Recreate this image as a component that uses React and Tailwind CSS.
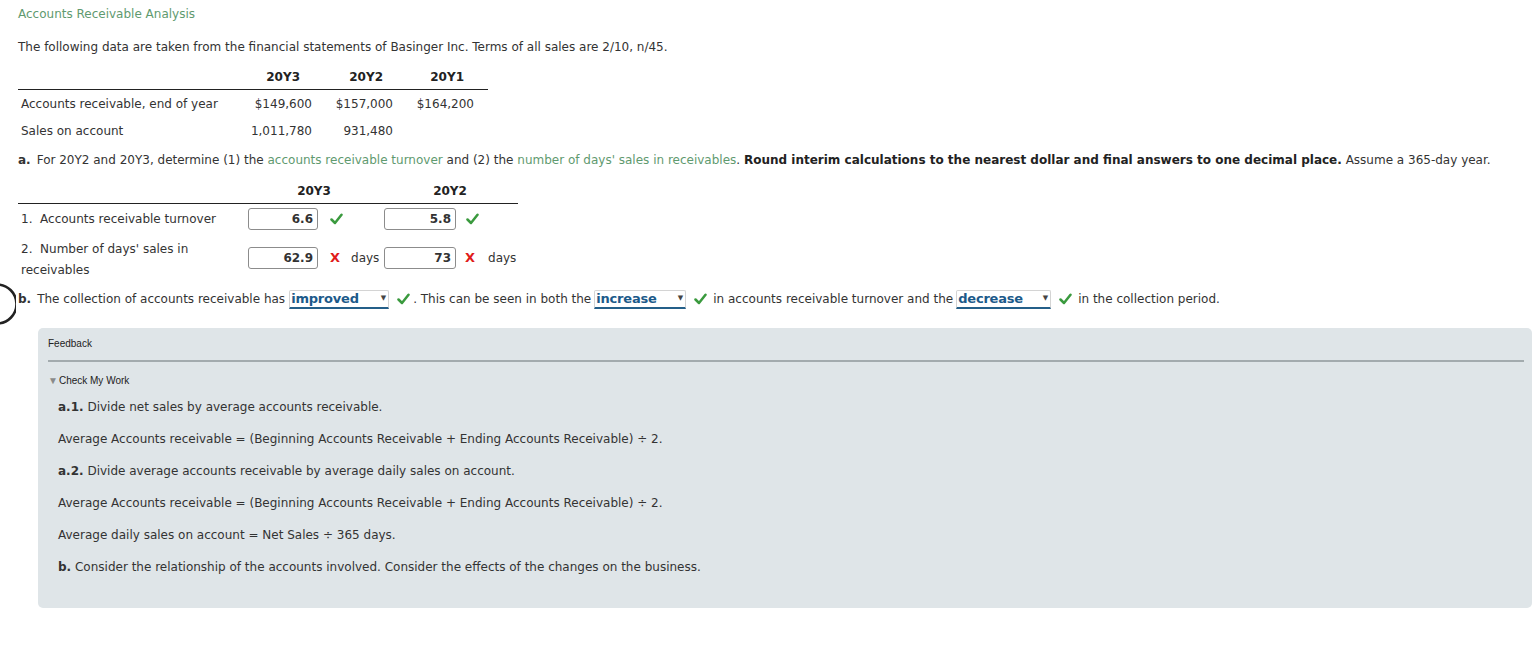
const green = "text-[#5f9a6f]";

function Check() {
  return (
    <svg width="13" height="12" viewBox="0 0 13 12" className="inline-block shrink-0">
      <path d="M1.5 6.5 L5 10 L11.5 1.8" fill="none" stroke="#3a9a3e" strokeWidth="2.5" strokeLinecap="round" strokeLinejoin="round" />
    </svg>
  );
}

function Cross() {
  return <span className="font-bold text-[#e01b1b] text-[13px] leading-none">X</span>;
}

function Answer({ value, w = "w-[70px]" }) {
  return (
    <div className={`${w} h-[22px] shrink-0 border border-[#8c8c8c] rounded-[3px] bg-white flex items-center justify-end pr-[4px] font-bold text-[#333]`}>
      {value}
    </div>
  );
}

function Dropdown({ value, w }) {
  return (
    <span className={`${w} inline-flex items-center justify-between h-[19px] border border-[#d4d4d4] border-b-2 border-b-[#245f89] rounded-t-[2px] bg-white pl-[1px] pr-[2px]`}>
      <span className="font-bold text-[#1c5a8a] text-[13px] leading-none tracking-[-0.2px]">{value}</span>
      <span className="text-[7px] text-[#444] leading-none">▼</span>
    </span>
  );
}

export default function App() {
  return (
    <div className="relative w-[1534px] min-h-[646px] bg-white font-['DejaVu_Sans',sans-serif] text-[12px] text-[#333] px-[18px] pt-[1px]">
      <svg width="16" height="46" viewBox="0 0 16 46" className="absolute left-0 top-[281px]">
        <path d="M-3 3.5 A19.5 19.5 0 0 1 -3 42.5" fill="none" stroke="#222" strokeWidth="2.6" />
      </svg>

      <div className={`h-[26px] flex items-center ${green}`}>Accounts Receivable Analysis</div>

      <div className="h-[26px] mt-[7px] flex items-center">
        The following data are taken from the financial statements of Basinger Inc. Terms of all sales are 2/10, n/45.
      </div>

      {/* data table */}
      <div className="w-[470px] mt-[4px]">
        <div className="h-[26px] flex items-center border-b border-[#222] font-bold text-[#222]">
          <div className="w-[216px]" />
          <div className="w-[84px] text-right pr-[18px]">20Y3</div>
          <div className="w-[81px] text-right pr-[16px]">20Y2</div>
          <div className="w-[81px] text-right pr-[16px]">20Y1</div>
        </div>
        <div className="h-[27px] flex items-center">
          <div className="w-[216px] pl-[3px]">Accounts receivable, end of year</div>
          <div className="w-[84px] text-right pr-[6px]">$149,600</div>
          <div className="w-[81px] text-right pr-[6px]">$157,000</div>
          <div className="w-[81px] text-right pr-[6px]">$164,200</div>
        </div>
        <div className="h-[27px] flex items-center">
          <div className="w-[216px] pl-[3px]">Sales on account</div>
          <div className="w-[84px] text-right pr-[6px]">1,011,780</div>
          <div className="w-[81px] text-right pr-[6px]">931,480</div>
          <div className="w-[81px]" />
        </div>
      </div>

      <div className="h-[26px] mt-[3px] flex items-center whitespace-nowrap">
        <span className="font-bold mr-[6px]">a.</span>
        <span>
          For 20Y2 and 20Y3, determine (1) the <span className={green}>accounts receivable turnover</span> and (2) the{" "}
          <span className={green}>number of days' sales in receivables</span>.{" "}
          <span className="font-bold text-[#222]">Round interim calculations to the nearest dollar and final answers to one decimal place.</span>{" "}
          Assume a 365-day year.
        </span>
      </div>

      {/* answer table */}
      <div className="w-[500px] mt-[5px]">
        <div className="h-[26px] flex items-center border-b border-[#222] font-bold text-[#222]">
          <div className="w-[228px]" />
          <div className="w-[136px] text-center">20Y3</div>
          <div className="w-[136px] text-center">20Y2</div>
        </div>
        <div className="h-[30px] flex items-center">
          <div className="w-[228px] pl-[3px]">1.&nbsp; Accounts receivable turnover</div>
          <div className="w-[136px] flex items-center pl-[2px]">
            <Answer value="6.6" />
            <span className="ml-[12px] flex"><Check /></span>
          </div>
          <div className="w-[136px] flex items-center pl-[2px]">
            <Answer value="5.8" w="w-[72px]" />
            <span className="ml-[10px] flex"><Check /></span>
          </div>
        </div>
        <div className="h-[48px] flex items-center">
          <div className="w-[228px] self-start pt-[5px] pl-[3px] leading-[21px]">
            2.&nbsp; Number of days' sales in
            <br />
            receivables
          </div>
          <div className="w-[136px] flex items-center pl-[2px]">
            <Answer value="62.9" />
            <span className="ml-[12px]"><Cross /></span>
            <span className="ml-[11px]">days</span>
          </div>
          <div className="w-[136px] flex items-center pl-[2px]">
            <Answer value="73" w="w-[72px]" />
            <span className="ml-[9px]"><Cross /></span>
            <span className="ml-[13px]">days</span>
          </div>
        </div>
      </div>

      <div className="h-[26px] mt-[4px] flex items-center whitespace-nowrap">
        <span className="font-bold mr-[6px]">b.</span>
        <span className="mr-[4px]">The collection of accounts receivable has</span>
        <Dropdown value="improved" w="w-[100px]" />
        <span className="ml-[8px] flex"><Check /></span>
        <span className="ml-[3px] mr-[3px]">. This can be seen in both the</span>
        <Dropdown value="increase" w="w-[92px]" />
        <span className="ml-[8px] flex"><Check /></span>
        <span className="ml-[6px] mr-[3px]">in accounts receivable turnover and the</span>
        <Dropdown value="decrease" w="w-[95px]" />
        <span className="ml-[8px] flex"><Check /></span>
        <span className="ml-[6px]">in the collection period.</span>
      </div>

      {/* feedback */}
      <div className="ml-[20px] mt-[16px] w-[1494px] h-[280px] rounded-[5px] bg-[#dfe5e8] pt-[8px]">
        <div className="pl-[10px] h-[14px] flex items-center font-['Liberation_Sans',sans-serif] text-[10px] text-[#222]">
          Feedback
        </div>
        <div className="ml-[10px] mr-[8px] mt-[10px] h-[2px] bg-[#a3abae]" />
        <div className="pl-[10px] mt-[11px] h-[14px] flex items-center font-['Liberation_Sans',sans-serif] text-[10px] text-[#222]">
          <span className="text-[10px] text-[#8a8a8a] mr-[1px]">▼</span>
          Check My Work
        </div>
        <div className="pl-[20px] mt-[10px] flex flex-col gap-[12px] leading-[20px]">
          <p><span className="font-bold">a.1.</span> Divide net sales by average accounts receivable.</p>
          <p>Average Accounts receivable = (Beginning Accounts Receivable + Ending Accounts Receivable) ÷ 2.</p>
          <p><span className="font-bold">a.2.</span> Divide average accounts receivable by average daily sales on account.</p>
          <p>Average Accounts receivable = (Beginning Accounts Receivable + Ending Accounts Receivable) ÷ 2.</p>
          <p>Average daily sales on account = Net Sales ÷ 365 days.</p>
          <p><span className="font-bold">b.</span> Consider the relationship of the accounts involved. Consider the effects of the changes on the business.</p>
        </div>
      </div>
    </div>
  );
}
